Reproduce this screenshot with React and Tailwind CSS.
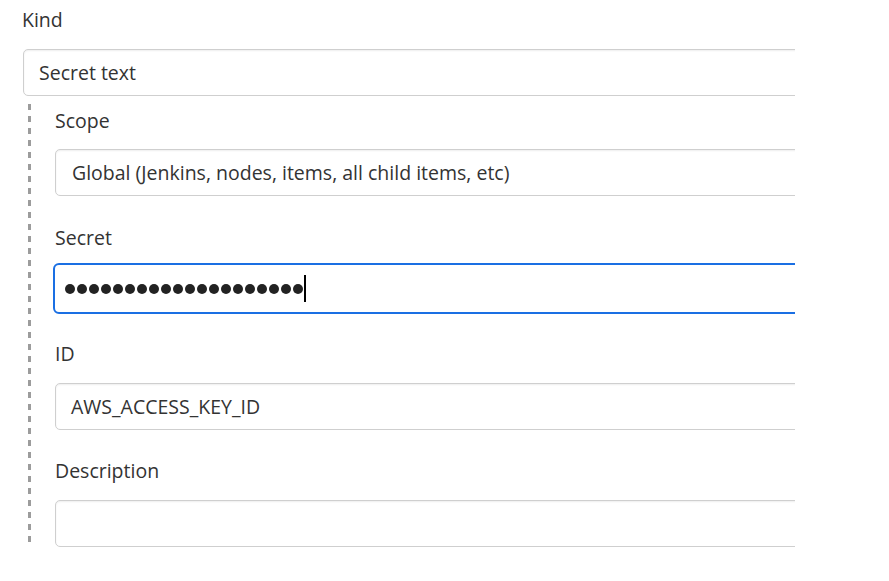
import React from "react";

function Field({ className = "", children }) {
    return (
        <div
            className={`w-[900px] h-[47px] border border-[#cfcfcf] rounded-[5px] bg-white flex items-center px-[15px] shadow-[inset_0_1px_2px_rgba(0,0,0,0.07)] ${className}`}
        >
            {children}
        </div>
    );
}

function Label({ className = "", children }) {
    return <div className={`h-[24px] leading-[24px] text-[#333] ${className}`}>{children}</div>;
}

export default function App() {
    const dots = Array.from({ length: 20 });
    return (
        <div className="w-[889px] h-[581px] bg-white font-['Open_Sans',sans-serif] text-[19.5px] text-[#333]">
            <div className="w-[795px] overflow-hidden pl-[22px] pt-[8px]">
                {/* Kind */}
                <Label>Kind</Label>
                <Field className="mt-[17px] ml-[1px]">Secret text</Field>

                {/* nested section with dashed guide */}
                <div className="ml-[6px] mt-[8px] pt-[5px] pl-[27px] bg-[linear-gradient(to_bottom,#9c9c9c_6px,transparent_6px)] bg-[length:3px_12px] bg-repeat-y bg-left-top">
                    <Label>Scope</Label>
                    <Field className="mt-[16px] px-[16px]">Global (Jenkins, nodes, items, all child items, etc)</Field>

                    <Label className="mt-[30px]">Secret</Label>
                    <div className="mt-[13px] -ml-[2px] w-[900px] h-[51px] border-2 border-[#1a6fe3] rounded-[6px] bg-white flex items-center pl-[10px]">
                        <div className="flex items-center gap-[2px]">
                            {dots.map((_, i) => (
                                <span key={i} className="w-[10px] h-[10px] rounded-full bg-[#222]" />
                            ))}
                        </div>
                        <span className="ml-[1px] w-[1.5px] h-[27px] bg-black" />
                    </div>

                    <Label className="mt-[28px]">ID</Label>
                    <Field className="mt-[17px] px-[11px]">AWS_ACCESS_KEY_ID</Field>

                    <Label className="mt-[29px]">Description</Label>
                    <Field className="mt-[17px]"></Field>
                </div>
            </div>
        </div>
    );
}
